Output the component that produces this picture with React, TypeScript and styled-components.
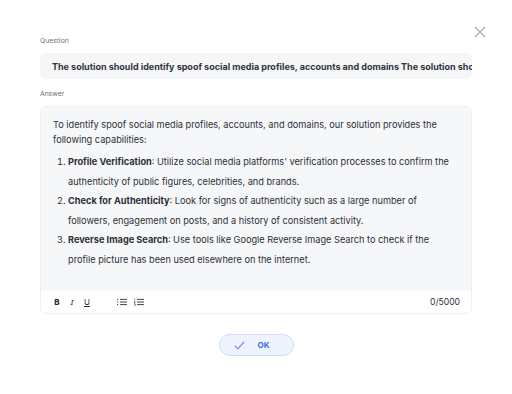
import styled, { createGlobalStyle } from 'styled-components';

const GlobalStyle = createGlobalStyle`
  * { box-sizing: border-box; }
  html, body { margin: 0; padding: 0; background: #ffffff; }
  body { font-family: Inter, "Open Sans", sans-serif; color: #2b2f36; }
`;

const Modal = styled.div`
  position: relative;
  width: 512px;
  height: 394px;
  padding: 36px 40px 0 40px;
  display: flex;
  flex-direction: column;
`;

const CloseButton = styled.button`
  position: absolute;
  top: 26px;
  right: 26px;
  width: 12px;
  height: 12px;
  padding: 0;
  border: none;
  background: transparent;
  cursor: pointer;
  display: flex;
`;

const Label = styled.div`
  font-size: 6.8px;
  color: #6b7079;
  line-height: 10px;
  margin-bottom: 7px;
`;

const QuestionBox = styled.div`
  height: 26px;
  background: #f5f6f8;
  border-radius: 6px;
  padding: 0 12px;
  display: flex;
  align-items: center;
  font-size: 9px;
  font-weight: 700;
  color: #30343b;
  white-space: nowrap;
  overflow: hidden;
  margin-bottom: 10px;
`;

const AnswerBox = styled.div`
  border: 1px solid #eef0f3;
  border-radius: 6px;
  overflow: hidden;
  display: flex;
  flex-direction: column;
`;

const AnswerBody = styled.div`
  background: #f6f7f9;
  height: 184px;
  padding: 10px 12px 0 12px;
  font-size: 9.2px;
  color: #2b2f36;
`;

const Intro = styled.p`
  margin: 0 0 5px 0;
  line-height: 15px;
`;

const List = styled.ol`
  margin: 0;
  padding-left: 15px;
  line-height: 19.6px;
`;

const Strong = styled.b`
  font-weight: 700;
`;

const Toolbar = styled.div`
  height: 22px;
  background: #ffffff;
  display: flex;
  align-items: center;
  padding: 0 11px 0 12px;
  gap: 7px;
`;

const ToolButton = styled.span<{ $italic?: boolean; $underline?: boolean; $bold?: boolean }>`
  font-family: ${p => (p.$italic ? '"DejaVu Serif", serif' : 'Inter, sans-serif')};
  font-size: 8px;
  font-weight: ${p => (p.$bold ? 800 : 400)};
  font-style: ${p => (p.$italic ? 'italic' : 'normal')};
  text-decoration: ${p => (p.$underline ? 'underline' : 'none')};
  color: #2b2f36;
  width: 8px;
  display: flex;
  justify-content: center;
`;

const ToolGap = styled.span`
  width: 12px;
`;

const Counter = styled.span`
  margin-left: auto;
  font-size: 8.6px;
  color: #2b2f36;
`;

const Footer = styled.div`
  display: flex;
  justify-content: center;
  margin-top: 20px;
`;

const OkButton = styled.button`
  width: 75px;
  height: 22px;
  border-radius: 11px;
  border: 1px solid #cfdcf6;
  background: #eff3fd;
  display: flex;
  align-items: center;
  padding: 0 0 0 14px;
  gap: 13px;
  font-family: Inter, sans-serif;
  font-size: 8px;
  font-weight: 700;
  color: #3b6be0;
  cursor: pointer;
`;

const ListIcon = ({ numbered }: { numbered?: boolean }) => (
  <svg width="10" height="8" viewBox="0 0 10 8" fill="none" stroke="#2b2f36" strokeWidth="0.9">
    {numbered ? (
      <>
        <path d="M0.5 0.6v1.6M0.3 3.4h1l-1 1.4h1M0.3 5.8h1v1.6h-1" strokeWidth="0.6" />
        <path d="M3 1.4h7M3 4h7M3 6.6h7" />
      </>
    ) : (
      <>
        <path d="M0 1.4h1.2M0 4h1.2M0 6.6h1.2" />
        <path d="M3 1.4h7M3 4h7M3 6.6h7" />
      </>
    )}
  </svg>
);

export default function App() {
  return (
    <>
      <GlobalStyle />
      <Modal>
        <CloseButton aria-label="Close">
          <svg width="12" height="12" viewBox="0 0 12 12" stroke="#a4a8ae" strokeWidth="1.1">
            <path d="M1 1l10 10M11 1L1 11" />
          </svg>
        </CloseButton>
        <Label>Question</Label>
        <QuestionBox>
          The solution should identify spoof social media profiles, accounts and domains The solution should
        </QuestionBox>
        <Label>Answer</Label>
        <AnswerBox>
          <AnswerBody>
            <Intro>
              To identify spoof social media profiles, accounts, and domains, our solution provides the
              following capabilities:
            </Intro>
            <List>
              <li>
                <Strong>Profile Verification</Strong>: Utilize social media platforms' verification processes to
                confirm the authenticity of public figures, celebrities, and brands.
              </li>
              <li>
                <Strong>Check for Authenticity</Strong>: Look for signs of authenticity such as a large number of
                followers, engagement on posts, and a history of consistent activity.
              </li>
              <li>
                <Strong>Reverse Image Search</Strong>: Use tools like Google Reverse Image Search to check if the
                profile picture has been used elsewhere on the internet.
              </li>
            </List>
          </AnswerBody>
          <Toolbar>
            <ToolButton $bold>B</ToolButton>
            <ToolButton $italic>I</ToolButton>
            <ToolButton $underline>U</ToolButton>
            <ToolGap />
            <ListIcon />
            <ListIcon numbered />
            <Counter>0/5000</Counter>
          </Toolbar>
        </AnswerBox>
        <Footer>
          <OkButton>
            <svg width="11" height="9" viewBox="0 0 11 9" fill="none" stroke="#5b86e6" strokeWidth="1.1">
              <path d="M0.8 4.6l3 3.2L10.2 0.8" />
            </svg>
            OK
          </OkButton>
        </Footer>
      </Modal>
    </>
  );
}
